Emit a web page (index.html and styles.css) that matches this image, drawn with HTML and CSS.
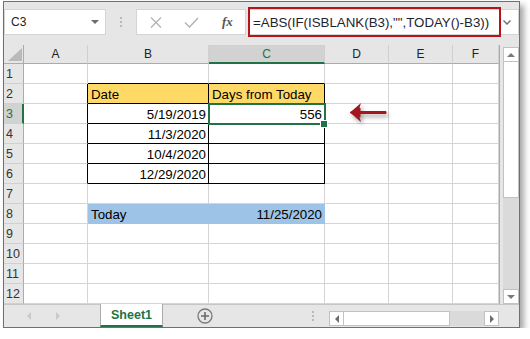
FILE: index.html
```html
<!DOCTYPE html>
<html lang="en">
<head>
<meta charset="UTF-8" />
<title>Days from Today</title>
<link rel="stylesheet" href="styles.css">
</head>
<body>
<div class="window">
  <!-- formula bar -->
  <div class="formula-bar">
    <div class="name-box"><span>C3</span><span class="caret"></span></div>
    <div class="grip"><i></i><i></i><i></i></div>
    <div class="fn-box">
      <svg class="fn-icon" width="12" height="11" viewBox="0 0 12 11"><path d="M1 0.5 L11 10.5 M11 0.5 L1 10.5" stroke="#b4b4b4" stroke-width="1.3" fill="none"/></svg>
      <svg class="fn-icon" width="15" height="11" viewBox="0 0 15 11"><path d="M1 5.5 L5.5 10 L14 1" stroke="#b4b4b4" stroke-width="1.5" fill="none"/></svg>
      <span class="fx">fx</span>
    </div>
    <div class="formula-input">
      <span class="formula">=ABS(IF(ISBLANK(B3),"",TODAY()-B3))</span>
      <svg class="chev" width="8" height="5" viewBox="0 0 8 5"><path d="M0.5 0.5 L4 4 L7.5 0.5" stroke="#6d6d6d" stroke-width="1.4" fill="none"/></svg>
    </div>
    <div class="highlight"></div>
  </div>

  <!-- sheet -->
  <div class="sheet">
    <div class="grid">
      <div class="corner"><svg width="20" height="19" viewBox="0 0 20 19"><path d="M4 16 L18 16 L18 3 Z" fill="#b9b9b9"/></svg></div>
      <div class="ch">A</div><div class="ch">B</div><div class="ch sel">C</div><div class="ch">D</div><div class="ch">E</div><div class="ch">F</div>

      <div class="rh">1</div><div class="c"></div><div class="c bb"></div><div class="c bb"></div><div class="c"></div><div class="c"></div><div class="c"></div>
      <div class="rh">2</div><div class="c br"></div><div class="c t head">Date</div><div class="c t head">Days from Today</div><div class="c"></div><div class="c"></div><div class="c"></div>
      <div class="rh sel">3</div><div class="c br"></div><div class="c t num">5/19/2019</div><div class="c t num active">556</div><div class="c"></div><div class="c"></div><div class="c"></div>
      <div class="rh">4</div><div class="c br"></div><div class="c t num">11/3/2020</div><div class="c t"></div><div class="c"></div><div class="c"></div><div class="c"></div>
      <div class="rh">5</div><div class="c br"></div><div class="c t num">10/4/2020</div><div class="c t"></div><div class="c"></div><div class="c"></div><div class="c"></div>
      <div class="rh">6</div><div class="c br"></div><div class="c t num">12/29/2020</div><div class="c t"></div><div class="c"></div><div class="c"></div><div class="c"></div>
      <div class="rh">7</div><div class="c"></div><div class="c"></div><div class="c"></div><div class="c"></div><div class="c"></div><div class="c"></div>
      <div class="rh">8</div><div class="c"></div><div class="c today">Today</div><div class="c today num">11/25/2020</div><div class="c"></div><div class="c"></div><div class="c"></div>
      <div class="rh">9</div><div class="c"></div><div class="c"></div><div class="c"></div><div class="c"></div><div class="c"></div><div class="c"></div>
      <div class="rh">10</div><div class="c"></div><div class="c"></div><div class="c"></div><div class="c"></div><div class="c"></div><div class="c"></div>
      <div class="rh">11</div><div class="c"></div><div class="c"></div><div class="c"></div><div class="c"></div><div class="c"></div><div class="c"></div>
      <div class="rh">12</div><div class="c"></div><div class="c"></div><div class="c"></div><div class="c"></div><div class="c"></div><div class="c"></div>
    </div>
    <div class="vscroll">
      <div class="sb-btn"><span class="tri-up"></span></div>
      <div class="v-thumb"></div>
      <div class="v-track"></div>
      <div class="sb-btn"><span class="tri-down"></span></div>
    </div>
  </div>

  <!-- sheet tabs -->
  <div class="tabbar">
    <div class="tab-nav"><span class="nav-left"></span><span class="nav-right"></span></div>
    <div class="tab">Sheet1</div>
    <div class="tab-add">
      <svg width="16" height="16" viewBox="0 0 16 16"><circle cx="8" cy="8" r="7" stroke="#7a7a7a" stroke-width="1.3" fill="none"/><path d="M8 4 V12 M4 8 H12" stroke="#6a6a6a" stroke-width="1.6"/></svg>
    </div>
    <div class="tab-split"><div class="grip"><i></i><i></i><i></i></div></div>
    <div class="hscroll">
      <div class="sb-btn"><span class="tri-left"></span></div>
      <div class="h-thumb"></div>
      <div class="h-track"></div>
      <div class="sb-btn"><span class="tri-right"></span></div>
    </div>
  </div>

  <svg class="arrow" width="44" height="26" viewBox="0 0 44 26">
    <path d="M40 11.5 L14 11.5 L14 8 L4 12.5 L14 17 L14 13.5 L40 13.5 Z" fill="#a3181d" stroke="#a3181d" stroke-width="1"/>
    <path d="M15 3 L4 12.5 L15 22 L12 12.5 Z" fill="#a3181d"/>
  </svg>
</div>
</body>
</html>
```

FILE: styles.css
```css
* {
  box-sizing: border-box;
}
body {
  margin: 0;
  background: #fff;
  font-family: 'Liberation Sans', Arial, sans-serif;
}
.window {
  position: relative;
  margin: 1px 0 0 3px;
  width: 517px;
  height: 327px;
  border: 1px solid #707070;
  background: #e6e6e6;
  box-shadow: 4px 4px 6px rgba(0,0,0,0.35);
}

/* Formula bar */
.formula-bar {
  position: relative;
  height: 43px;
  padding-top: 7px;
  display: flex;
  align-items: flex-start;
}
.name-box {
  width: 102px;
  height: 26px;
  background: #fff;
  border: 1px solid #d4d4d4;
  display: flex;
  align-items: center;
  justify-content: space-between;
  padding: 0 6px 0 6px;
  font-size: 12px;
  color: #222;
}
.caret {
  width: 0;
  height: 0;
  border-left: 4px solid transparent;
  border-right: 4px solid transparent;
  border-top: 4px solid #6d6d6d;
  margin-right: 0;
}
.grip {
  width: 30px;
  height: 26px;
  display: flex;
  flex-direction: column;
  align-items: center;
  justify-content: center;
  gap: 2px;
}
.grip i {
  display: block;
  width: 2px;
  height: 2px;
  background: #b9b9b9;
}
.fn-box {
  width: 110px;
  height: 26px;
  background: #fff;
  border: 1px solid #d4d4d4;
  display: flex;
  align-items: center;
  padding-left: 13px;
}
.fn-icon + .fn-icon {
  margin-left: 22px;
}
.fx {
  margin-left: 23px;
  font-family: 'Liberation Serif', serif;
  font-style: italic;
  font-weight: bold;
  font-size: 13px;
  color: #555;
}
.formula-input {
  margin-left: 2px;
  width: 271px;
  height: 26px;
  background: #fff;
  border: 1px solid #d4d4d4;
  display: flex;
  align-items: center;
  justify-content: space-between;
  padding: 0 7px 0 4px;
}
.formula {
  font-size: 13.3px;
  color: #1f2330;
}
.highlight {
  position: absolute;
  left: 244px;
  top: 5px;
  width: 253px;
  height: 30px;
  border: 2px solid #b5141b;
}

/* Sheet grid */
.sheet {
  display: flex;
  height: 259px;
}
.grid {
  display: grid;
  grid-template-columns: 20px 64px 121px 116px 64px 64px 46px;
  grid-template-rows: 19px repeat(12, 20px);
  background: #fff;
  border-right: 1px solid #ababab;
}
.corner {
  background: #e6e6e6;
  border-right: 1px solid #ababab;
  border-bottom: 1px solid #ababab;
}
.corner svg {
  display: block;
}
.ch {
  background: #e6e6e6;
  border-right: 1px solid #d0d0d0;
  border-bottom: 1px solid #ababab;
  text-align: center;
  font-size: 12px;
  line-height: 18px;
  color: #222;
}
.ch.sel {
  background: #d2d2d2;
  border-bottom: 2px solid #217346;
  color: #217346;
}
.rh {
  background: #e6e6e6;
  border-right: 1px solid #ababab;
  border-bottom: 1px solid #d0d0d0;
  font-size: 12.5px;
  line-height: 20px;
  padding-left: 2px;
  color: #333;
}
.rh.sel {
  background: #d2d2d2;
  border-right: 2px solid #217346;
  color: #217346;
}
.c {
  border-right: 1px solid #d4d4d4;
  border-bottom: 1px solid #d4d4d4;
  padding: 2px 2px 0 3px;
  font-size: 13.3px;
  line-height: 17px;
  color: #000;
  white-space: nowrap;
}
.bb {
  border-bottom-color: #000;
}
.br {
  border-right-color: #000;
}
.t {
  border-right-color: #000;
  border-bottom-color: #000;
}
.head {
  background: #ffd966;
}
.num {
  text-align: right;
}
.today {
  background: #9dc3e6;
  border-color: #9dc3e6;
}
.active {
  position: relative;
  z-index: 1;
}
.active::after {
  content: "";
  position: absolute;
  left: -1px;
  top: -1px;
  right: -2px;
  bottom: -2px;
  border: 2px solid #217346;
}
.active::before {
  content: "";
  position: absolute;
  right: -4px;
  bottom: -5px;
  width: 6px;
  height: 6px;
  background: #217346;
  border: 1px solid #fff;
  z-index: 2;
}

/* Scroll bars */
.vscroll {
  width: 20px;
  padding: 2px 1px 0 3px;
  display: flex;
  flex-direction: column;
}
.sb-btn {
  width: 16px;
  height: 15px;
  background: #fff;
  border: 1px solid #c2c2c2;
  display: flex;
  align-items: center;
  justify-content: center;
  flex-shrink: 0;
}
.v-thumb {
  height: 136px;
  background: #fff;
  border: 1px solid #c2c2c2;
  border-top: none;
}
.v-track {
  flex: 1;
  background: #dadada;
}
.tri-up, .tri-down, .tri-left, .tri-right {
  width: 0;
  height: 0;
}
.tri-up {
  border-left: 4px solid transparent;
  border-right: 4px solid transparent;
  border-bottom: 4px solid #7a7a7a;
}
.tri-down {
  border-left: 4px solid transparent;
  border-right: 4px solid transparent;
  border-top: 4px solid #7a7a7a;
}
.tri-left {
  border-top: 4px solid transparent;
  border-bottom: 4px solid transparent;
  border-right: 4px solid #6d6d6d;
}
.tri-right {
  border-top: 4px solid transparent;
  border-bottom: 4px solid transparent;
  border-left: 4px solid #6d6d6d;
}

/* Tab bar */
.tabbar {
  height: 23px;
  display: flex;
  border-top: 1px solid #c6c6c6;
}
.tab-nav {
  width: 96px;
  display: flex;
  align-items: center;
  padding-left: 23px;
  gap: 25px;
}
.nav-left {
  border-top: 4px solid transparent;
  border-bottom: 4px solid transparent;
  border-right: 4px solid #c9c9c9;
}
.nav-right {
  border-top: 4px solid transparent;
  border-bottom: 4px solid transparent;
  border-left: 4px solid #c9c9c9;
}
.tab {
  width: 63px;
  margin-top: -1px;
  background: #fff;
  border-left: 1px solid #ababab;
  border-right: 1px solid #ababab;
  border-bottom: 2px solid #217346;
  text-align: center;
  font-weight: bold;
  font-size: 12.5px;
  line-height: 22px;
  color: #217346;
}
.tab-add {
  width: 84px;
  display: flex;
  align-items: center;
  justify-content: center;
}
.tab-add svg {
  display: block;
}
.tab-split {
  width: 82px;
  display: flex;
  justify-content: flex-end;
  padding-right: 1px;
  padding-top: 1px;
}
.tab-split .grip {
  height: 20px;
}
.hscroll {
  width: 170px;
  height: 15px;
  margin-top: 6px;
  display: flex;
}
.hscroll .sb-btn {
  width: 15px;
  height: 15px;
}
.h-thumb {
  width: 106px;
  background: #fff;
  border: 1px solid #c2c2c2;
  border-left: none;
}
.h-track {
  flex: 1;
  background: #dadada;
}

/* annotation arrow */
.arrow {
  position: absolute;
  left: 342px;
  top: 98px;
  filter: drop-shadow(2px 3px 2px rgba(0,0,0,0.35));
}
```
